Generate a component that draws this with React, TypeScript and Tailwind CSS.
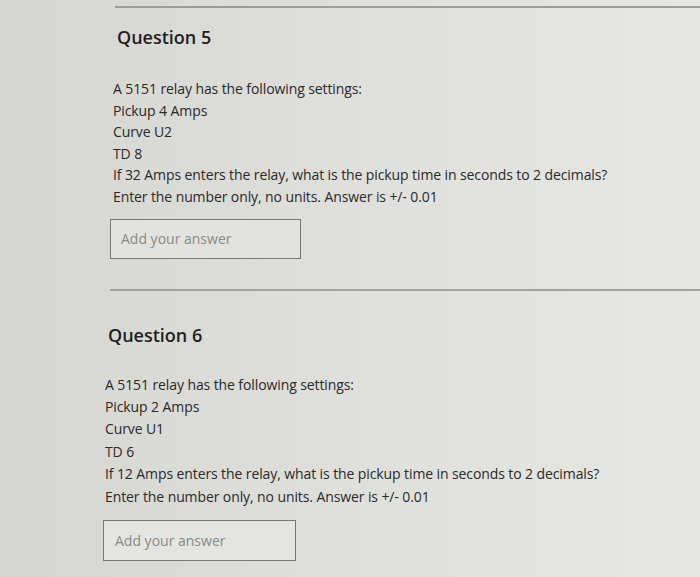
import React from "react";

export default function App() {
  const font = { fontFamily: '"Open Sans", "Noto Sans", sans-serif' };
  return (
    <div
      className="w-[700px] h-[577px] overflow-hidden bg-gradient-to-r from-[#d5d5d1] via-[#dfdfdb] to-[#e6e6e2] text-[#2a2a2a]"
      style={font}
    >
      <div className="pt-[6px]">
        <div className="ml-[115px] h-[2px] bg-[#9c9c9a]" />
        <div className="pl-[117px]">
          <h2 className="mt-[17px] text-[18px] leading-[24px] font-semibold text-[#1f1f1f]">Question 5</h2>
          <div className="mt-[29px] -ml-[4px] text-[14px] leading-[21.6px] tracking-[-0.1px]">
            <p>A 5151 relay has the following settings:</p>
            <p>Pickup 4 Amps</p>
            <p>Curve U2</p>
            <p>TD 8</p>
            <p>If 32 Amps enters the relay, what is the pickup time in seconds to 2 decimals?</p>
            <p>Enter the number only, no units. Answer is +/- 0.01</p>
          </div>
          <div className="mt-[11px] -ml-[7px] w-[191px] h-[40px] border border-[#77777a] bg-[#e2e2de] flex items-center px-[10px] text-[14px] text-[#8a8a8a]">
            Add your answer
          </div>
        </div>
        <div className="mt-[30px] ml-[110px] h-[2px] bg-[#a2a2a0]" />
        <div className="pl-[108px]">
          <h2 className="mt-[32px] text-[18px] leading-[24px] font-semibold text-[#1f1f1f]">Question 6</h2>
          <div className="mt-[27px] -ml-[3px] text-[14px] leading-[22.4px] tracking-[-0.1px]">
            <p>A 5151 relay has the following settings:</p>
            <p>Pickup 2 Amps</p>
            <p>Curve U1</p>
            <p>TD 6</p>
            <p>If 12 Amps enters the relay, what is the pickup time in seconds to 2 decimals?</p>
            <p>Enter the number only, no units. Answer is +/- 0.01</p>
          </div>
          <div className="mt-[12px] -ml-[5px] w-[193px] h-[41px] border border-[#77777a] bg-[#e4e4e0] flex items-center px-[11px] text-[14px] text-[#8a8a8a]">
            Add your answer
          </div>
        </div>
      </div>
    </div>
  );
}
